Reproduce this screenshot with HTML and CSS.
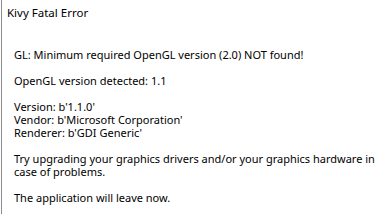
FILE: index.html
```html
<!DOCTYPE html>
<html>
<head>
    <meta charset="utf-8">
    <title>Kivy Fatal Error</title>
    <link rel="stylesheet" href="styles.css">
</head>
<body>
<div class="dialog">
    <div class="title">Kivy Fatal Error</div>
    <div class="message">
        <p>GL: Minimum required OpenGL version (2.0) NOT found!</p>
        <p>OpenGL version detected: 1.1</p>
        <p>Version: b'1.1.0'<br>Vendor: b'Microsoft Corporation'<br>Renderer: b'GDI Generic'</p>
        <p>Try upgrading your graphics drivers and/or your graphics hardware in<br>case of problems.</p>
        <p>The application will leave now.</p>
    </div>
</div>
</body>
</html>
```

FILE: styles.css
```css
body {
    margin: 0;
    background-color: #fff;
    color: #000;
    font-family: "Noto Sans", "DejaVu Sans", sans-serif;
    font-size: 11px;
    line-height: 13px;
}
.dialog {
    height: 214px;
    margin-left: 1px;
    border-left: 1px solid #8c8c8c;
    overflow: hidden;
}
.title {
    padding: 6px 0 0 5px;
    font-size: 11.5px;
}
.message {
    padding: 29px 0 0 12px;
    white-space: nowrap;
}
.message p {
    margin: 0 0 13px 0;
}
```
